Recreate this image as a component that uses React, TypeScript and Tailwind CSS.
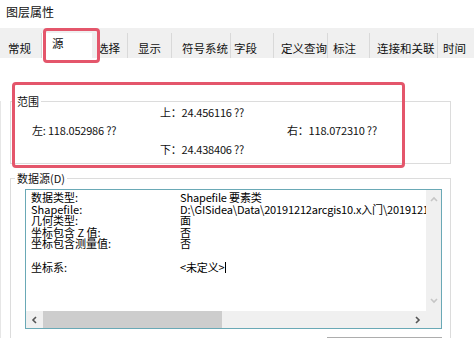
import React from 'react';

const tabs = [
  { label: '常规', w: 42, pl: 8 },
  { label: '源', w: 50, pl: 10, active: true },
  { label: '选择', w: 36, pl: 5 },
  { label: '显示', w: 44, pl: 10 },
  { label: '符号系统', w: 59, pl: 10 },
  { label: '字段', w: 43, pl: 3 },
  { label: '定义查询', w: 54, pl: 7 },
  { label: '标注', w: 42, pl: 5 },
  { label: '连接和关联', w: 68, pl: 7 },
  { label: '时间', w: 40, pl: 5 },
];

const rows: [string, string][] = [
  ['数据类型:', 'Shapefile 要素类'],
  ['Shapefile:', 'D:\\GISidea\\Data\\20191212arcgis10.x入门\\20191212版'],
  ['几何类型:', '面'],
  ['坐标包含 Z 值:', '否'],
  ['坐标包含测量值:', '否'],
  ['', ''],
  ['坐标系:', '<未定义>'],
];

function Chevron({ dir, color }: { dir: 'up' | 'down' | 'left' | 'right'; color: string }) {
  const d = {
    up: 'M1 5 L4 2 L7 5',
    down: 'M1 2 L4 5 L7 2',
    left: 'M5 1 L2 4 L5 7',
    right: 'M2 1 L5 4 L2 7',
  }[dir];
  return (
    <svg width="8" height="8" viewBox="0 0 8 8">
      <path d={d} fill="none" stroke={color} strokeWidth="1.6" />
    </svg>
  );
}

export default function App() {
  return (
    <div
      className="relative w-[474px] h-[338px] overflow-hidden bg-white text-[#111]"
      style={{ fontFamily: '"Noto Sans CJK SC", "Noto Sans", sans-serif' }}
    >
      {/* Title */}
      <div className="h-[28px] pt-[4px] pl-[6px] text-[12px] leading-[16px]">图层属性</div>

      {/* Tab strip */}
      <div className="flex h-[30px] items-end bg-[#f0f0f0]">
        {tabs.map((t) => (
          <div
            key={t.label}
            style={{ width: t.w, paddingLeft: t.pl }}
            className={
              t.active
                ? 'h-[25px] shrink-0 bg-white pt-[3px] text-[11.5px] leading-[14px]'
                : 'h-[25px] shrink-0 border-r border-[#d9d9d9] pt-[8px] text-[11.5px] leading-[14px] whitespace-nowrap'
            }
          >
            {t.label}
          </div>
        ))}
      </div>

      {/* Page */}
      <div className="h-[280px] border-l border-[#e6e6e6] text-[11px]">
        {/* 范围 */}
        <div className="relative mt-[43px] ml-[9px] h-[63px] w-[441px] border border-[#dcdcdc]">
          <span className="absolute -top-[8px] left-[4px] bg-white px-[2px] leading-[14px]">范围</span>
          <div className="pt-[3px] leading-[14px] tracking-[-0.2px]">
            <div className="ml-[149px]">上：24.456116 ??</div>
            <div className="mt-[4px] flex">
              <span className="ml-[21px] w-[255px]">左: 118.052986 ??</span>
              <span>右：118.072310 ??</span>
            </div>
            <div className="mt-[5px] ml-[149px]">下：24.438406 ??</div>
          </div>
        </div>

        {/* 数据源 */}
        <div className="relative mt-[14px] ml-[9px] h-[200px] w-[441px] border border-[#dcdcdc]">
          <span className="absolute -top-[8px] left-[4px] bg-white px-[2px] leading-[14px]">数据源(D)</span>
          <div className="mt-[10px] ml-[14px] flex h-[140px] w-[417px] flex-col border border-[#6aa9b6]">
            <div className="flex flex-1 overflow-hidden">
              <div className="flex-1 overflow-hidden pt-[2px] pl-[5px] leading-[11.6px] text-black">
                {rows.map(([k, v], i) => (
                  <div key={i} className="flex h-[11.6px] whitespace-nowrap">
                    <span className="w-[149px] shrink-0">{k}</span>
                    <span className="tracking-[-0.15px]">
                      {v}
                      {i === rows.length - 1 && <span className="ml-[1px] inline-block h-[11px] w-[1px] bg-black align-[-1px]" />}
                    </span>
                  </div>
                ))}
              </div>
              <div className="flex w-[15px] flex-col items-center justify-between bg-[#f0f0f0] py-[6px]">
                <Chevron dir="up" color="#c6c6c6" />
                <Chevron dir="down" color="#c6c6c6" />
              </div>
            </div>
            <div className="flex h-[17px]">
              <div className="flex flex-1 items-center bg-[#f0f0f0]">
                <div className="flex w-[17px] justify-center">
                  <Chevron dir="left" color="#555" />
                </div>
                <div className="h-full w-[179px] bg-[#cdcdcd]" />
                <div className="flex-1" />
                <div className="flex w-[17px] justify-center">
                  <Chevron dir="right" color="#555" />
                </div>
              </div>
              <div className="w-[15px] bg-[#f0f0f0]" />
            </div>
          </div>
          <div className="mt-[8px] ml-[316px] h-[20px] w-[115px] border border-[#adadad] bg-[#e1e1e1]" />
        </div>
      </div>

      {/* Annotation boxes */}
      <div className="pointer-events-none absolute left-[43px] top-[28px] h-[35px] w-[57px] rounded-[4px] border-[3px] border-[#e4566b]" />
      <div className="pointer-events-none absolute left-[12px] top-[82px] h-[86px] w-[393px] rounded-[4px] border-[3px] border-[#e4566b]" />
    </div>
  );
}
